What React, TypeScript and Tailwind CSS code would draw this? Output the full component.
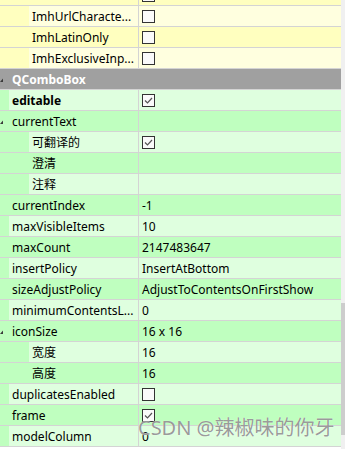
import type { ReactNode } from "react";

type Tone = "dark" | "light";
type Scheme = "yellow" | "green";

const palette: Record<Scheme, Record<Tone, string>> = {
  yellow: { dark: "bg-[#ffffbf]", light: "bg-[#ffffdf]" },
  green: { dark: "bg-[#bfffbf]", light: "bg-[#dfffdf]" },
};

function Arrow() {
  return (
    <svg width="4" height="6" viewBox="0 0 4 6" className="absolute left-0 top-[8px]">
      <polygon points="0,5 3,1.5 3,5" fill="#3a3a3a" />
    </svg>
  );
}

function CheckBox({ checked }: { checked?: boolean }) {
  return (
    <div className="w-[13px] h-[13px] border border-[#333] bg-[#fafafa] flex items-center justify-center">
      {checked && (
        <svg width="11" height="11" viewBox="0 0 11 11">
          <path d="M2 5.5 L4.5 8 L9 3" fill="none" stroke="#555" strokeWidth="1.2" />
        </svg>
      )}
    </div>
  );
}

interface RowProps {
  name: string;
  value?: ReactNode;
  scheme?: Scheme;
  tone: Tone;
  child?: boolean;
  bold?: boolean;
  arrow?: boolean;
}

function Row({ name, value, scheme = "green", tone, child, bold, arrow }: RowProps) {
  const dark = palette[scheme].dark;
  const own = palette[scheme][tone];
  return (
    <div className={`relative flex h-[21px] shrink-0 border-b border-[#d4d4d4] ${own}`}>
      {arrow && <Arrow />}
      <div className={`${child ? "w-[29px]" : "w-[9px]"} ${dark}`} />
      <div
        className={`flex-1 flex items-center pl-[3px] pt-[2px] overflow-hidden whitespace-nowrap ${own} ${
          bold ? "font-bold" : ""
        }`}
      >
        {name}
      </div>
      <div className="w-px bg-[#d4d4d4]" />
      <div className="w-[202px] flex items-center pl-[3px] pt-[1px] whitespace-nowrap overflow-hidden">
        {value}
      </div>
    </div>
  );
}

export default function App() {
  return (
    <div
      className="relative w-[345px] h-[449px] overflow-hidden flex bg-white text-[12px] text-[#000]"
      style={{ fontFamily: '"Noto Sans", "Noto Sans CJK SC", sans-serif' }}
    >
      <div className="flex-1 flex flex-col overflow-hidden">
        <div className="-mt-[15px]">
          <Row name="ImhDialableCharact..." scheme="yellow" tone="dark" child value={<CheckBox />} />
        </div>
        <Row name="ImhUrlCharacte..." scheme="yellow" tone="light" child value={<CheckBox />} />
        <Row name="ImhLatinOnly" scheme="yellow" tone="dark" child value={<CheckBox />} />
        <Row name="ImhExclusiveInp..." scheme="yellow" tone="light" child value={<CheckBox />} />

        <div className="relative flex items-center h-[21px] shrink-0 border-b border-[#d4d4d4] bg-[#a0a0a0] pl-[12px] pt-[2px] font-bold text-white">
          <Arrow />
          QComboBox
        </div>

        <Row name="editable" tone="light" bold value={<CheckBox checked />} />
        <Row name="currentText" tone="dark" arrow />
        <Row name="可翻译的" tone="light" child value={<CheckBox checked />} />
        <Row name="澄清" tone="dark" child />
        <Row name="注释" tone="light" child />
        <Row name="currentIndex" tone="dark" value="-1" />
        <Row name="maxVisibleItems" tone="light" value="10" />
        <Row name="maxCount" tone="dark" value="2147483647" />
        <Row name="insertPolicy" tone="light" value="InsertAtBottom" />
        <Row name="sizeAdjustPolicy" tone="dark" value="AdjustToContentsOnFirstShow" />
        <Row name="minimumContentsL..." tone="light" value="0" />
        <Row name="iconSize" tone="dark" arrow value="16 x 16" />
        <Row name="宽度" tone="light" child value="16" />
        <Row name="高度" tone="dark" child value="16" />
        <Row name="duplicatesEnabled" tone="light" value={<CheckBox />} />
        <Row name="frame" tone="dark" value={<CheckBox checked />} />
        <Row name="modelColumn" tone="light" value="0" />
      </div>

      {/* scrollbar */}
      <div className="w-[4px] bg-[#f0f0f0] flex flex-col">
        <div className="h-[303px]" />
        <div className="h-[132px] bg-[#cdcdcd]" />
      </div>

      <div
        className="absolute left-[138px] top-[418px] text-[20px] leading-none text-[#808080]/80 whitespace-nowrap pointer-events-none"
        style={{ textShadow: "0 0 1px #fff" }}
      >
        CSDN @辣椒味的你牙
      </div>
    </div>
  );
}
